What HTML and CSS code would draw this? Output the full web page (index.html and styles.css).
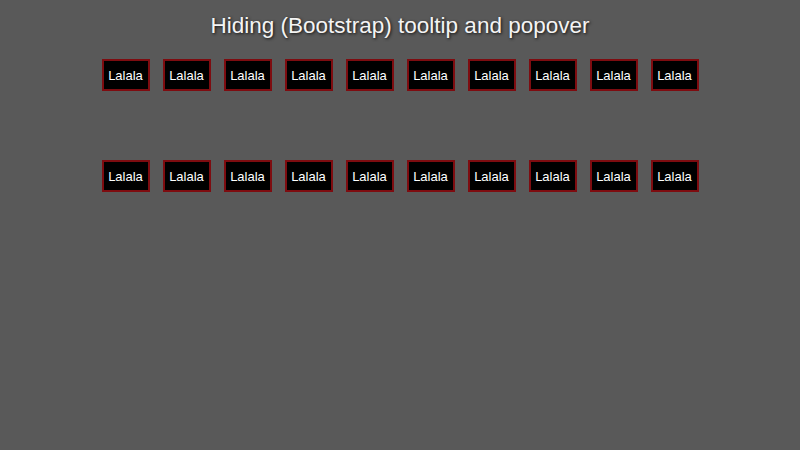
FILE: index.html
```html
<!DOCTYPE html>
<html lang="en">
<head>
    <meta charset="UTF-8">
    <title>Hiding tooltip and popover</title>
    <link rel="stylesheet" href="styles.css">
</head>
<body>
    <h1>Hiding (Bootstrap) tooltip and popover</h1>
    <div class="row">
        <button class="lala" title="Tooltip">Lalala</button>
        <button class="lala" title="Tooltip">Lalala</button>
        <button class="lala" title="Tooltip">Lalala</button>
        <button class="lala" title="Tooltip">Lalala</button>
        <button class="lala" title="Tooltip">Lalala</button>
        <button class="lala" title="Tooltip">Lalala</button>
        <button class="lala" title="Tooltip">Lalala</button>
        <button class="lala" title="Tooltip">Lalala</button>
        <button class="lala" title="Tooltip">Lalala</button>
        <button class="lala" title="Tooltip">Lalala</button>
    </div>
    <div class="row">
        <button class="lala" title="Popover">Lalala</button>
        <button class="lala" title="Popover">Lalala</button>
        <button class="lala" title="Popover">Lalala</button>
        <button class="lala" title="Popover">Lalala</button>
        <button class="lala" title="Popover">Lalala</button>
        <button class="lala" title="Popover">Lalala</button>
        <button class="lala" title="Popover">Lalala</button>
        <button class="lala" title="Popover">Lalala</button>
        <button class="lala" title="Popover">Lalala</button>
        <button class="lala" title="Popover">Lalala</button>
    </div>
</body>
</html>
```

FILE: styles.css
```css
body {
    margin: 0;
    background: #595959;
    font-family: "Liberation Sans", Arial, sans-serif;
    color: #fff;
}
h1 {
    margin: 13px 0 20px;
    font-size: 22.5px;
    font-weight: normal;
    text-align: center;
    color: #f4f4f4;
    text-shadow: 1px 1px 3px rgba(0, 0, 0, 0.8);
}
.row {
    display: flex;
    justify-content: center;
    gap: 13px;
    margin-bottom: 69px;
}
.lala {
    width: 48px;
    height: 32px;
    padding: 0;
    background: #000;
    border: 2px solid #7e0c10;
    color: #fff;
    font-family: inherit;
    font-size: 13px;
    cursor: pointer;
}
```
